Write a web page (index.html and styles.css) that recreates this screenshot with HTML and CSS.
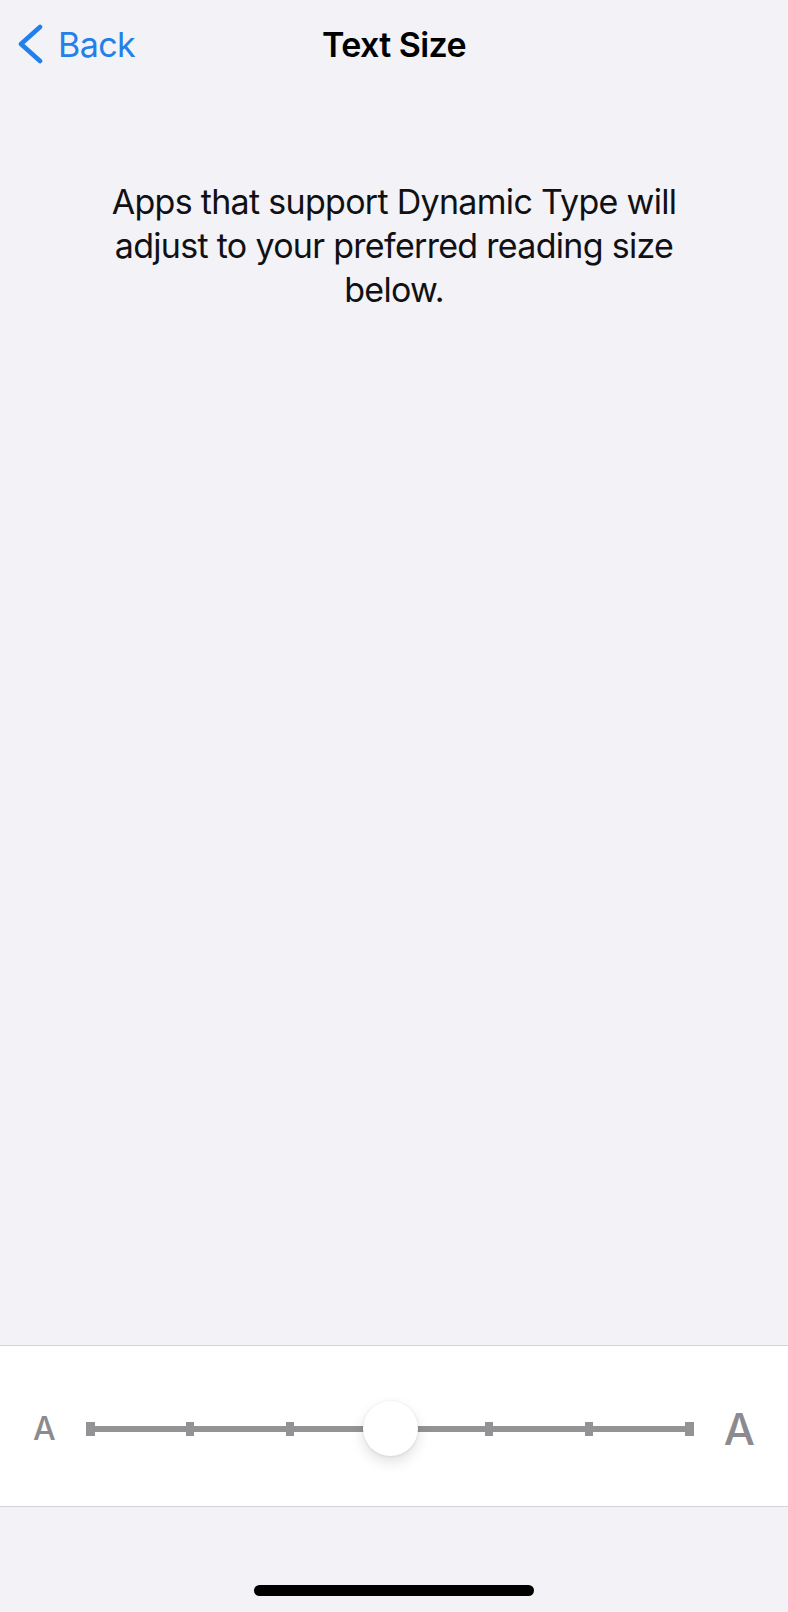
FILE: index.html
```html
<!DOCTYPE html>
<html lang="en">
<head>
<meta charset="utf-8">
<title>Text Size</title>
<link rel="stylesheet" href="styles.css">
</head>
<body>
<div class="screen">
  <header class="nav">
    <a class="nav-back" href="#">
      <svg class="chevron" width="26" height="40" viewBox="0 0 26 40" aria-hidden="true">
        <polyline points="22,3 3,20 22,37" fill="none" stroke="currentColor" stroke-width="4.6" stroke-linecap="round" stroke-linejoin="round"/>
      </svg>
      <span>Back</span>
    </a>
    <h1 class="nav-title">Text Size</h1>
    <span class="nav-spacer"></span>
  </header>

  <p class="intro">Apps that support Dynamic Type will adjust to your preferred reading size below.</p>

  <div class="filler"></div>

  <section class="size-panel">
    <span class="size-label size-label-small">A</span>
    <div class="slider">
      <div class="slider-track">
        <span class="tick tick-end"></span>
        <span class="tick"></span>
        <span class="tick"></span>
        <span class="tick"></span>
        <span class="tick"></span>
        <span class="tick"></span>
        <span class="tick tick-end"></span>
      </div>
      <span class="slider-thumb" style="left: 50%"></span>
    </div>
    <span class="size-label size-label-large">A</span>
  </section>

  <footer class="home-area">
    <span class="home-indicator"></span>
  </footer>
</div>
</body>
</html>
```

FILE: styles.css
```css
* {
  box-sizing: border-box;
}

html, body {
  margin: 0;
  padding: 0;
}

body {
  background: #f2f2f7;
  font-family: Inter, "Liberation Sans", Arial, sans-serif;
  color: #111113;
}

.screen {
  height: 1612px;
  display: flex;
  flex-direction: column;
}

/* navigation bar */
.nav {
  height: 88px;
  display: grid;
  grid-template-columns: 1fr auto 1fr;
  align-items: center;
  padding: 0 0 0 18px;
}

.nav-back {
  display: flex;
  align-items: center;
  gap: 14px;
  color: #2280ea;
  text-decoration: none;
  font-size: 34px;
  letter-spacing: -0.6px;
  justify-self: start;
}

.chevron {
  display: block;
}

.nav-title {
  margin: 0;
  font-size: 34px;
  font-weight: 600;
  color: #000;
  letter-spacing: -0.6px;
  transform: translateX(-9px);
}

/* description */
.intro {
  margin: 92px auto 0;
  width: 600px;
  text-align: center;
  font-size: 34px;
  line-height: 44px;
  letter-spacing: -0.7px;
}

.filler {
  flex: 1;
}

/* text size slider panel */
.size-panel {
  height: 162px;
  background: #fff;
  border-top: 1px solid #d4d3d9;
  border-bottom: 1px solid #d4d3d9;
  display: flex;
  align-items: center;
  gap: 30px;
  padding: 5px 33px 0 33px;
}

.size-label {
  color: #8b8b8f;
  font-weight: 500;
  line-height: 1;
}

.size-label-small {
  font-size: 32px;
}

.size-label-large {
  font-size: 44px;
}

.slider {
  position: relative;
  flex: 1;
  height: 56px;
  display: flex;
  align-items: center;
}

.slider-track {
  flex: 1;
  height: 14px;
  display: flex;
  justify-content: space-between;
  align-items: center;
  background: linear-gradient(#939396, #939396) center / 100% 6px no-repeat;
}

.tick {
  width: 8px;
  height: 14px;
  background: #939396;
}

.tick-end {
  width: 9px;
}

.slider-thumb {
  position: absolute;
  top: 0;
  width: 55px;
  height: 55px;
  margin-left: -27px;
  border-radius: 50%;
  background: #fff;
  box-shadow: 0 6px 14px rgba(0, 0, 0, 0.12), 0 0.5px 3px rgba(0, 0, 0, 0.10);
}

/* home indicator strip */
.home-area {
  height: 105px;
  display: flex;
  justify-content: center;
  align-items: flex-end;
  padding-bottom: 16px;
}

.home-indicator {
  width: 280px;
  height: 11px;
  border-radius: 6px;
  background: #000;
}
```
